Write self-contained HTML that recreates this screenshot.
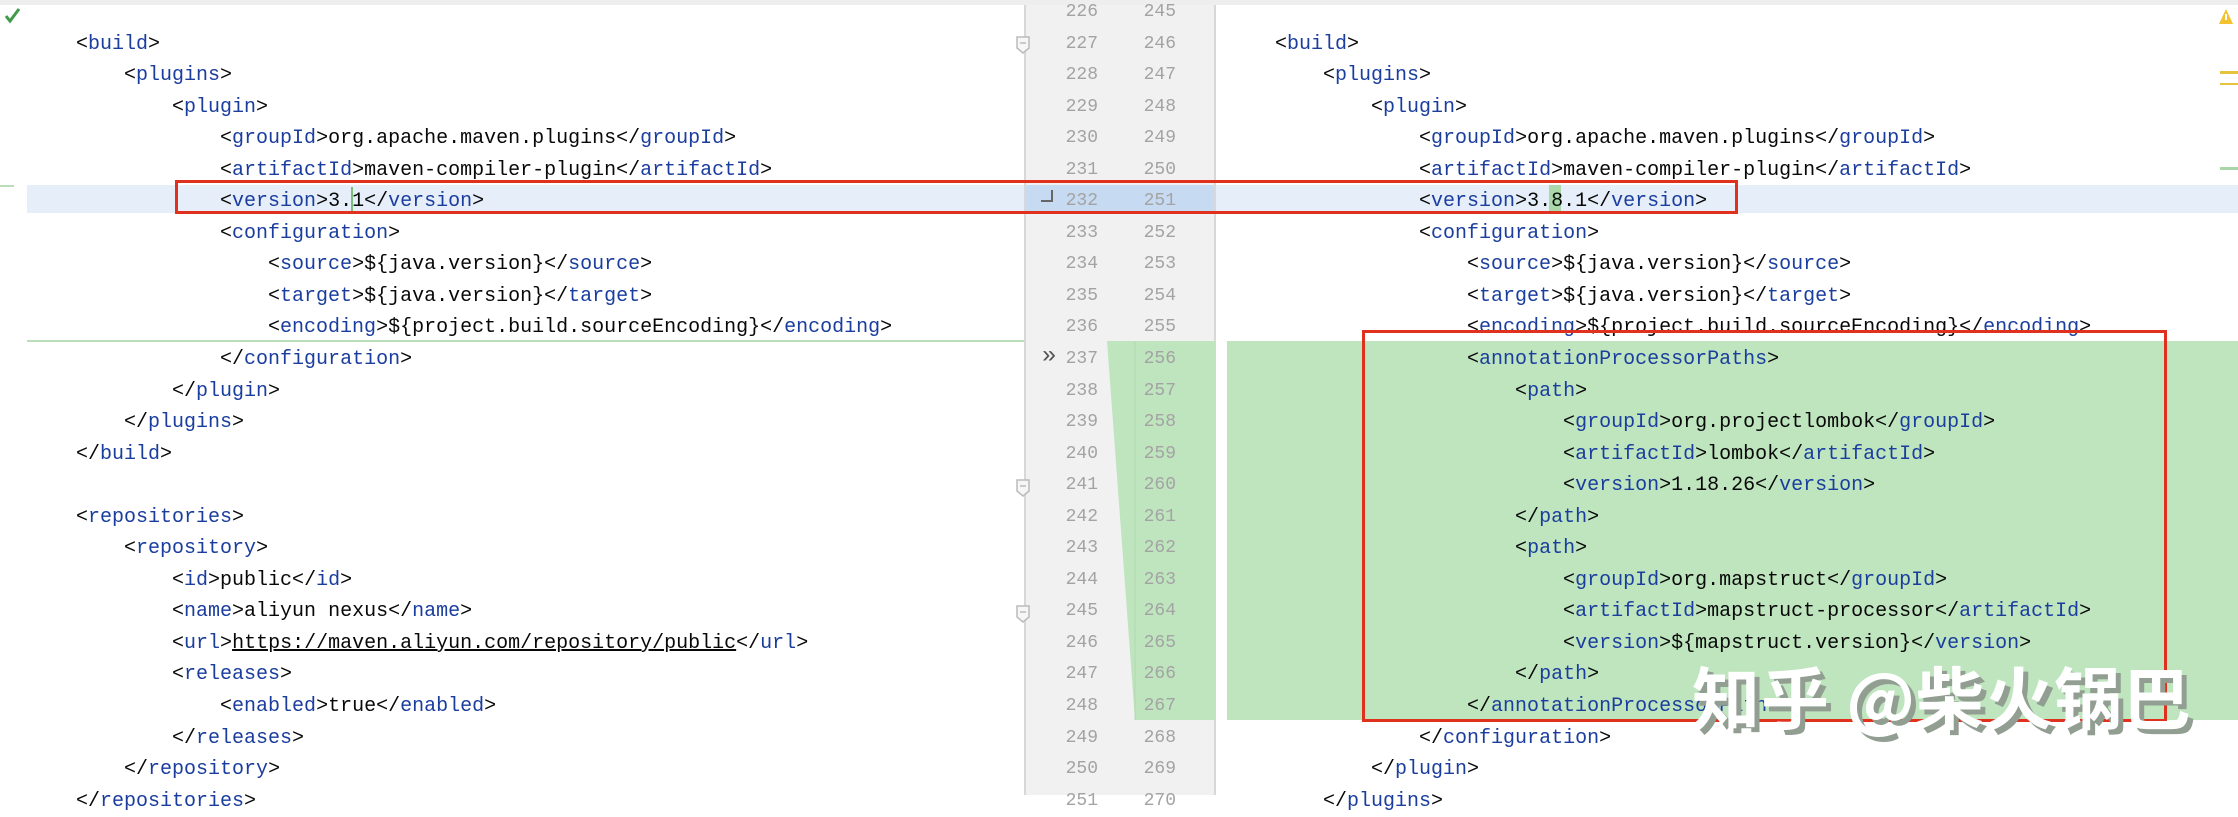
<!DOCTYPE html>
<html><head><meta charset="utf-8"><style>
*{margin:0;padding:0;box-sizing:border-box}
body{width:2238px;height:795px;overflow:hidden;background:#fff;position:relative;font-family:"Liberation Mono",monospace;font-size:20px;color:#080808}
.abs{position:absolute}
.code{position:absolute;top:-3px;line-height:31.55px}
.code div{height:31.55px;white-space:pre}
i{font-style:normal;color:#1a3d9e}
.num{position:absolute;top:-3px;line-height:31.55px;font-size:18px;color:#a3a3a3;text-align:right}
.num div{height:31.55px}
</style></head><body>
<div class="abs" style="left:0;top:0;width:2238px;height:5px;background:#eeeeee"></div>
<div class="abs" style="left:27px;top:185px;width:997px;height:28px;background:#e6eef9"></div>
<div class="abs" style="left:1216px;top:185px;width:1022px;height:28px;background:#e6eef9"></div>
<div class="abs" style="left:27px;top:340px;width:997px;height:2px;background:#b9deb9"></div>
<div class="abs" style="left:0;top:185px;width:14px;height:2px;background:#b9deb9"></div>
<div class="abs" style="left:1024px;top:5px;width:192px;height:790px;background:#f1f1f1;border-left:2px solid #d8d8d8;border-right:2px solid #d8d8d8"></div>
<div class="abs" style="left:1026px;top:185px;width:188px;height:28px;background:#c6daf1"></div>
<svg class="abs" style="left:1026px;top:341px" width="190" height="380"><polygon points="81,0 190,0 190,379 109,379" fill="#bfe5bf"/><line x1="109" y1="0" x2="109" y2="379" stroke="#b2d9b2" stroke-width="1"/></svg>
<div class="abs" style="left:1227px;top:341px;width:1011px;height:379px;background:#bfe5bf"></div>
<div class="abs" style="left:1549px;top:185px;width:12px;height:28px;background:#aad8aa"></div>
<div class="abs" style="left:351px;top:187px;width:2px;height:26px;background:#7cbf7c"></div>

<div class="num" style="left:1040px;width:58px"><div>226</div><div>227</div><div>228</div><div>229</div><div>230</div><div>231</div><div>232</div><div>233</div><div>234</div><div>235</div><div>236</div><div>237</div><div>238</div><div>239</div><div>240</div><div>241</div><div>242</div><div>243</div><div>244</div><div>245</div><div>246</div><div>247</div><div>248</div><div>249</div><div>250</div><div>251</div></div>
<div class="num" style="left:1118px;width:58px"><div>245</div><div>246</div><div>247</div><div>248</div><div>249</div><div>250</div><div>251</div><div>252</div><div>253</div><div>254</div><div>255</div><div>256</div><div>257</div><div>258</div><div>259</div><div>260</div><div>261</div><div>262</div><div>263</div><div>264</div><div>265</div><div>266</div><div>267</div><div>268</div><div>269</div><div>270</div></div>
<div class="abs" style="left:1042px;top:341px;font-size:24px;line-height:32px;color:#555">»</div>
<div class="abs" style="left:1041px;top:190px;width:12px;height:12px;border-right:2px solid #666;border-bottom:2px solid #666"></div>
<svg class="abs" style="left:1015px;top:35px" width="16" height="20"><path d="M2 2h12v11l-6 5-6-5z" fill="#f6f6f6" stroke="#bbb" stroke-width="1.5"/><line x1="5" y1="8" x2="11" y2="8" stroke="#bbb" stroke-width="1.5"/></svg>
<svg class="abs" style="left:1015px;top:478px" width="16" height="20"><path d="M2 2h12v11l-6 5-6-5z" fill="#f6f6f6" stroke="#bbb" stroke-width="1.5"/><line x1="5" y1="8" x2="11" y2="8" stroke="#bbb" stroke-width="1.5"/></svg>
<svg class="abs" style="left:1015px;top:604px" width="16" height="20"><path d="M2 2h12v11l-6 5-6-5z" fill="#f6f6f6" stroke="#bbb" stroke-width="1.5"/><line x1="5" y1="8" x2="11" y2="8" stroke="#bbb" stroke-width="1.5"/></svg>

<div class="code" style="left:28px"><div> </div><div>    &lt;<i>build</i>&gt;</div><div>        &lt;<i>plugins</i>&gt;</div><div>            &lt;<i>plugin</i>&gt;</div><div>                &lt;<i>groupId</i>&gt;org.apache.maven.plugins&lt;/<i>groupId</i>&gt;</div><div>                &lt;<i>artifactId</i>&gt;maven-compiler-plugin&lt;/<i>artifactId</i>&gt;</div><div>                &lt;<i>version</i>&gt;3.1&lt;/<i>version</i>&gt;</div><div>                &lt;<i>configuration</i>&gt;</div><div>                    &lt;<i>source</i>&gt;${java.version}&lt;/<i>source</i>&gt;</div><div>                    &lt;<i>target</i>&gt;${java.version}&lt;/<i>target</i>&gt;</div><div>                    &lt;<i>encoding</i>&gt;${project.build.sourceEncoding}&lt;/<i>encoding</i>&gt;</div><div>                &lt;/<i>configuration</i>&gt;</div><div>            &lt;/<i>plugin</i>&gt;</div><div>        &lt;/<i>plugins</i>&gt;</div><div>    &lt;/<i>build</i>&gt;</div><div> </div><div>    &lt;<i>repositories</i>&gt;</div><div>        &lt;<i>repository</i>&gt;</div><div>            &lt;<i>id</i>&gt;public&lt;/<i>id</i>&gt;</div><div>            &lt;<i>name</i>&gt;aliyun nexus&lt;/<i>name</i>&gt;</div><div>            &lt;<i>url</i>&gt;<u>https://maven.aliyun.com/repository/public</u>&lt;/<i>url</i>&gt;</div><div>            &lt;<i>releases</i>&gt;</div><div>                &lt;<i>enabled</i>&gt;true&lt;/<i>enabled</i>&gt;</div><div>            &lt;/<i>releases</i>&gt;</div><div>        &lt;/<i>repository</i>&gt;</div><div>    &lt;/<i>repositories</i>&gt;</div></div>

<div class="code" style="left:1227px"><div> </div><div>    &lt;<i>build</i>&gt;</div><div>        &lt;<i>plugins</i>&gt;</div><div>            &lt;<i>plugin</i>&gt;</div><div>                &lt;<i>groupId</i>&gt;org.apache.maven.plugins&lt;/<i>groupId</i>&gt;</div><div>                &lt;<i>artifactId</i>&gt;maven-compiler-plugin&lt;/<i>artifactId</i>&gt;</div><div>                &lt;<i>version</i>&gt;3.8.1&lt;/<i>version</i>&gt;</div><div>                &lt;<i>configuration</i>&gt;</div><div>                    &lt;<i>source</i>&gt;${java.version}&lt;/<i>source</i>&gt;</div><div>                    &lt;<i>target</i>&gt;${java.version}&lt;/<i>target</i>&gt;</div><div>                    &lt;<i>encoding</i>&gt;${project.build.sourceEncoding}&lt;/<i>encoding</i>&gt;</div><div>                    &lt;<i>annotationProcessorPaths</i>&gt;</div><div>                        &lt;<i>path</i>&gt;</div><div>                            &lt;<i>groupId</i>&gt;org.projectlombok&lt;/<i>groupId</i>&gt;</div><div>                            &lt;<i>artifactId</i>&gt;lombok&lt;/<i>artifactId</i>&gt;</div><div>                            &lt;<i>version</i>&gt;1.18.26&lt;/<i>version</i>&gt;</div><div>                        &lt;/<i>path</i>&gt;</div><div>                        &lt;<i>path</i>&gt;</div><div>                            &lt;<i>groupId</i>&gt;org.mapstruct&lt;/<i>groupId</i>&gt;</div><div>                            &lt;<i>artifactId</i>&gt;mapstruct-processor&lt;/<i>artifactId</i>&gt;</div><div>                            &lt;<i>version</i>&gt;${mapstruct.version}&lt;/<i>version</i>&gt;</div><div>                        &lt;/<i>path</i>&gt;</div><div>                    &lt;/<i>annotationProcessorPaths</i>&gt;</div><div>                &lt;/<i>configuration</i>&gt;</div><div>            &lt;/<i>plugin</i>&gt;</div><div>        &lt;/<i>plugins</i>&gt;</div></div>

<div class="abs" style="left:175px;top:180px;width:1563px;height:34px;border:3px solid #e0301e"></div>
<div class="abs" style="left:1362px;top:330px;width:805px;height:392px;border:3px solid #e0301e"></div>

<svg class="abs" style="left:4px;top:7px" width="18" height="18"><path d="M2 9l4 5L15 2" fill="none" stroke="#3f9a4a" stroke-width="3"/></svg>
<svg class="abs" style="left:2218px;top:8px" width="16" height="18"><path d="M8 1L15 16H1z" fill="#f2c230"/><rect x="7" y="6" width="2" height="6" fill="#fff"/></svg>
<div class="abs" style="left:2220px;top:71px;width:18px;height:3px;background:#e5c440"></div>
<div class="abs" style="left:2220px;top:83px;width:18px;height:2px;background:#e5c440"></div>
<div class="abs" style="left:2220px;top:167px;width:18px;height:3px;background:#a8d6a8"></div>

<div class="abs" style="left:1692px;top:650px;font-family:'Noto Sans CJK SC',sans-serif;font-weight:bold;font-size:68px;line-height:90px;color:#fff;text-shadow:5px 5px 0 #929e92;white-space:nowrap;letter-spacing:1px">知乎 @柴火锅巴</div>
</body></html>
